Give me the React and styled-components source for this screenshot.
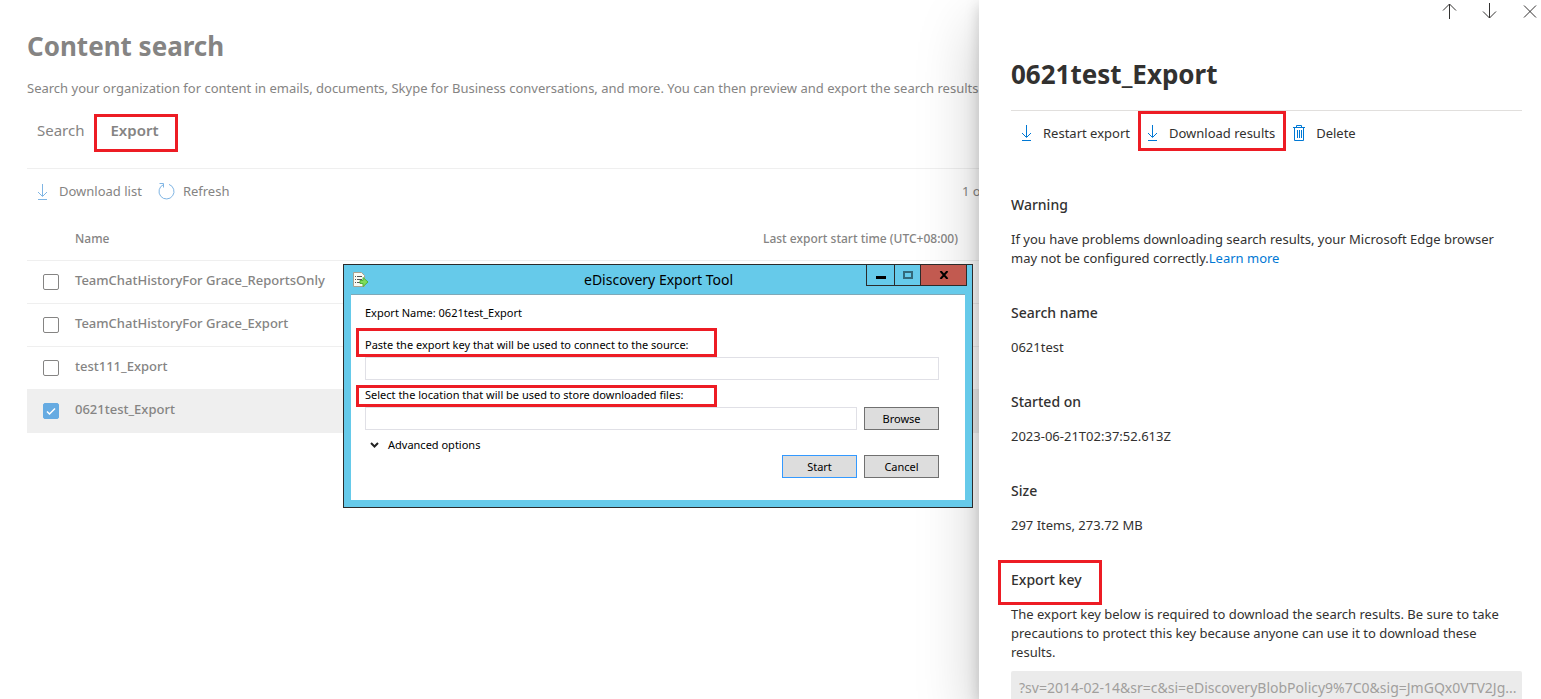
import React from "react";
import styled, { createGlobalStyle } from "styled-components";

const GlobalStyle = createGlobalStyle`
  * {
    box-sizing: border-box;
  }

  body {
    margin: 0;
    background: #fff;
    color: #323130;
    font: 13px/19px "Noto Sans", "Open Sans", sans-serif;
    overflow: hidden;
  }

  button,
  input {
    font: inherit;
    color: inherit;
  }

  h1,
  h2,
  h3,
  p {
    margin: 0;
  }
`;

const Screen = styled.div`
  position: relative;
  display: flex;
  height: 100vh;
  overflow: hidden;
`;

const Main = styled.main`
  flex: 1;
  min-width: 0;
  padding: 28px 0 0 27px;
  color: #858483;
  white-space: nowrap;
  overflow: hidden;
`;

const PageTitle = styled.h1`
  font-size: 26px;
  line-height: 36px;
  font-weight: 700;
`;

const PageText = styled.p`
  margin-top: 15px;
`;

const Tabs = styled.div`
  display: flex;
  margin-top: 16px;
  padding-bottom: 16px;
  border-bottom: 1px solid #efefef;
`;

const Tab = styled.button`
  height: 38px;
  padding: 0 10px 6px;
  border: 0;
  background: none;
  font-size: 15px;
  font-weight: ${(props) => (props.$active ? 600 : 400)};
`;

const MarkedTab = styled.span`
  height: 38px;
  padding: 0 6px 0 3px;
  border: 3px solid #ed1c24;

  ${Tab} {
    height: 30px;
    padding-bottom: 4px;
  }
`;

const Toolbar = styled.div`
  display: flex;
  align-items: center;
  height: 45px;
  padding-left: 8px;
`;

const ToolButton = styled.button`
  display: flex;
  align-items: center;
  gap: 8px;
  padding: 0;
  margin-right: 16px;
  border: 0;
  background: none;
`;

const SelectedCount = styled.span`
  margin-left: auto;
  width: 17px;
`;

const ExportTable = styled.table`
  width: 100%;
  border-collapse: collapse;
  table-layout: fixed;
`;

const HeadCell = styled.th`
  width: ${(props) => props.$width || "auto"};
  height: 46px;
  padding: 3px 0 0;
  border-bottom: 1px solid #efefef;
  font-size: 12px;
  font-weight: 500;
  text-align: left;
`;

const Row = styled.tr`
  background: ${(props) => (props.$selected ? "#efefef" : "transparent")};
`;

const Cell = styled.td`
  height: 43px;
  padding: 0 0 2px;
  border-bottom: 1px solid #efefef;
  font-weight: 500;
`;

const CheckCell = styled(Cell)`
  padding: 0 0 0 16px;
`;

const CheckLabel = styled.label`
  display: grid;
  width: 16px;

  > * {
    grid-area: 1 / 1;
  }
`;

const CheckBox = styled.input`
  appearance: none;
  display: block;
  width: 16px;
  height: 16px;
  margin: 0;
  border: 1px solid #858483;
  border-radius: 2px;
  background: #fff;

  &:checked {
    border-color: #66abe2;
    background: #66abe2;
  }
`;

const Flyout = styled.aside`
  position: relative;
  flex: 0 0 562px;
  padding: 0 19px 0 32px;
  background: #fff;
  box-shadow: 0 26px 58px rgba(0, 0, 0, 0.22), 0 5px 14px rgba(0, 0, 0, 0.18);
`;

const FlyoutNav = styled.div`
  display: flex;
  justify-content: flex-end;
  gap: 24px;
  height: 56px;
  padding-top: 3px;
  margin-right: -16px;
`;

const IconButton = styled.button`
  width: 16px;
  height: 16px;
  padding: 0;
  border: 0;
  background: none;
`;

const FlyoutTitle = styled.h2`
  padding-bottom: 18px;
  border-bottom: 1px solid #e1dfdd;
  font-size: 26px;
  line-height: 36px;
  font-weight: 700;
`;

const FlyoutActions = styled.div`
  display: flex;
  align-items: center;
  height: 40px;
  margin-bottom: 44px;
  padding-left: 8px;

  ${ToolButton} {
    margin-right: 8px;
    padding-top: 4px;
  }
`;

const MarkedAction = styled.span`
  display: flex;
  align-items: center;
  height: 40px;
  padding-left: 4px;
  margin-right: 6px;
  border: 3px solid #ed1c24;
`;

const Field = styled.section`
  margin-bottom: 35px;
`;

const FieldTitle = styled.h3`
  font-size: 14px;
  line-height: 20px;
  font-weight: 500;
`;

const MarkedTitle = styled(FieldTitle)`
  width: 104px;
  margin: -10px 0 -15px -13px;
  padding: 7px 10px 12px;
  border: 3px solid #ed1c24;
`;

const FieldText = styled.p`
  display: block;
  margin-top: 15px;
`;

const Link = styled.a`
  color: #0078d4;
  text-decoration: none;
`;

const KeyBox = styled.input`
  display: block;
  width: 100%;
  height: 32px;
  margin-top: 9px;
  padding: 0 2px 0 8px;
  border: 0;
  border-radius: 2px;
  background: #ebebeb;
  color: #a19f9d;
  font-size: 14px;
`;

const Dialog = styled.div`
  position: absolute;
  left: 343px;
  top: 264px;
  width: 630px;
  padding: 0 7px 7px;
  border: 1px solid #2b2b2b;
  background: #66caea;
  color: #000;
  font-size: 11px;
  line-height: 14px;
`;

const TitleBar = styled.header`
  display: grid;
  grid-template-columns: 1fr auto 1fr;
  height: 29px;
  padding-left: 1px;
`;

const DialogTitle = styled.h2`
  font-size: 14px;
  line-height: 30px;
  font-weight: 400;
`;

const DialogIcon = styled.svg`
  margin-top: 6px;
`;

const WindowButtons = styled.div`
  display: flex;
  justify-content: flex-end;
  height: 21px;
  margin-right: -2px;
`;

const WindowButton = styled.button`
  width: ${(props) => props.$width};
  height: 22px;
  margin: -1px 0 0 -1px;
  padding: 0;
  border: 1px solid #2b2b2b;
  background: ${(props) => (props.$close ? "#c25a50" : "transparent")};
`;

const DialogBody = styled.div`
  height: 206px;
  padding: 11px 26px 0 14px;
  border-top: 1px solid #7fa9b8;
  background: #fff;
`;

const MarkedLabel = styled.label`
  display: block;
  width: 361px;
  height: ${(props) => (props.$tall ? "29px" : "22px")};
  margin: ${(props) => (props.$tall ? "8px" : "5px")} 0 0 -9px;
  padding: ${(props) => (props.$tall ? "7px" : "0")} 6px 0;
  border: 3px solid #ed1c24;
`;

const DialogInput = styled.input`
  display: block;
  width: 100%;
  height: 23px;
  padding: 0 4px;
  border: 1px solid #e0e0e6;
  background: #fff;
`;

const PathRow = styled.div`
  display: flex;
  gap: 7px;
`;

const DialogButton = styled.button`
  flex: none;
  width: 75px;
  height: 23px;
  padding: 0;
  border: 1px solid ${(props) => (props.$primary ? "#3399ff" : "#707070")};
  background: #ddd;
`;

const Advanced = styled.button`
  display: flex;
  align-items: center;
  gap: 9px;
  margin-top: 8px;
  padding: 0 0 0 5px;
  border: 0;
  background: none;
`;

const DialogFooter = styled.div`
  display: flex;
  justify-content: flex-end;
  gap: 7px;
  margin-top: 3px;
`;

const rows = [
  { name: "TeamChatHistoryFor Grace_ReportsOnly" },
  { name: "TeamChatHistoryFor Grace_Export" },
  { name: "test111_Export" },
  { name: "0621test_Export", selected: true },
];

const DownloadIcon = ({ color = "#0078d4" }) => (
  <svg width="16" height="16" viewBox="0 0 16 16" fill="none" stroke={color}>
    <path d="M7.5 0v12M3 8l4.5 4.5L12 8M3 15.5h9" />
  </svg>
);

const RefreshIcon = () => (
  <svg width="17" height="17" viewBox="0 0 17 17" fill="none" stroke="#7fb5e4">
    <path d="M11 1.4A7.5 7.5 0 1 1 5.5 1.6M1.5 .5h4v4" />
  </svg>
);

const TrashIcon = () => (
  <svg width="16" height="16" viewBox="0 0 16 16" fill="none" stroke="#0078d4">
    <path d="M1 2.5h12M4.5 2.5v-2h5v2M2.5 2.5v13h9v-13M5.5 5v8M7.5 5v8M9.5 5v8" />
  </svg>
);

const ArrowIcon = ({ down }) => (
  <svg width="16" height="16" viewBox="0 0 16 16" fill="none" stroke="#323130">
    <path d={down ? "M7.5 0v15M1 8.5L7.5 15L14 8.5" : "M7.5 16V1M1 7.5L7.5 1L14 7.5"} />
  </svg>
);

const CloseIcon = () => (
  <svg width="16" height="16" viewBox="0 0 16 16" fill="none" stroke="#323130">
    <path d="M2 2.5l12 12M14 2.5l-12 12" />
  </svg>
);

const ExportWindow = () => (
  <Dialog role="dialog" aria-labelledby="dialog-title">
    <TitleBar>
      <DialogIcon width="17" height="17" viewBox="0 0 17 17">
        <path d="M1.5 1.5h8l3 3v11h-11z" fill="#fbfaf3" stroke="#a8a290" />
        <path d="M3 5.5h1M3 8.5h1M3 11.5h1M5 5.5h5M5 8.5h5M5 11.5h4" stroke="#555" />
        <path d="M8 9.5h3v-3l5 4.5l-5 4.5v-3H8z" fill="#7fdc5a" stroke="#4fb53a" />
      </DialogIcon>
      <DialogTitle id="dialog-title">eDiscovery Export Tool</DialogTitle>
      <WindowButtons>
        <WindowButton $width="29px" aria-label="Minimize">
          <svg width="10" height="10" viewBox="0 0 10 10">
            <path d="M0 7h10v3H0z" />
          </svg>
        </WindowButton>
        <WindowButton $width="27px" aria-label="Maximize">
          <svg width="10" height="8" viewBox="0 0 10 8" fill="none">
            <path d="M1 1h8v6H1z" stroke="#33697a" strokeWidth="2" />
          </svg>
        </WindowButton>
        <WindowButton $width="47px" $close aria-label="Close">
          <svg width="10" height="8" viewBox="0 0 10 8" fill="none">
            <path d="M1.5 0l7 8M8.5 0l-7 8" stroke="#000" strokeWidth="2" />
          </svg>
        </WindowButton>
      </WindowButtons>
    </TitleBar>
    <DialogBody>
      <p>Export Name: 0621test_Export</p>
      <MarkedLabel htmlFor="key" $tall>
        Paste the export key that will be used to connect to the source:
      </MarkedLabel>
      <DialogInput id="key" />
      <MarkedLabel htmlFor="path">
        Select the location that will be used to store downloaded files:
      </MarkedLabel>
      <PathRow>
        <DialogInput id="path" />
        <DialogButton>Browse</DialogButton>
      </PathRow>
      <Advanced>
        <svg width="9" height="6" viewBox="0 0 9 6" fill="none" stroke="#222" strokeWidth="2">
          <path d="M1 1l3.5 3.5L8 1" />
        </svg>
        Advanced options
      </Advanced>
      <DialogFooter>
        <DialogButton $primary>Start</DialogButton>
        <DialogButton>Cancel</DialogButton>
      </DialogFooter>
    </DialogBody>
  </Dialog>
);

const App = () => (
  <Screen>
    <GlobalStyle />
    <Main>
      <PageTitle>Content search</PageTitle>
      <PageText>
        Search your organization for content in emails, documents, Skype for Business
        conversations, and more. You can then preview and export the search results
      </PageText>
      <Tabs>
        <Tab>Search</Tab>
        <MarkedTab>
          <Tab $active>Export</Tab>
        </MarkedTab>
      </Tabs>
      <Toolbar>
        <ToolButton>
          <DownloadIcon color="#7fb5e4" />
          Download list
        </ToolButton>
        <ToolButton>
          <RefreshIcon />
          Refresh
        </ToolButton>
        <SelectedCount>1 of</SelectedCount>
      </Toolbar>
      <ExportTable>
        <thead>
          <tr>
            <HeadCell $width="48px" />
            <HeadCell>Name</HeadCell>
            <HeadCell $width="216px">Last export start time (UTC+08:00)</HeadCell>
          </tr>
        </thead>
        <tbody>
          {rows.map((row) => (
            <Row key={row.name} $selected={row.selected}>
              <CheckCell>
                <CheckLabel>
                  <CheckBox type="checkbox" aria-label={row.name} defaultChecked={row.selected} />
                  {row.selected && (
                    <svg width="16" height="16" viewBox="0 0 16 16" fill="none" stroke="#fff">
                      <path d="M4 8.5l2.5 2.5L12 5.5" strokeWidth="1.5" />
                    </svg>
                  )}
                </CheckLabel>
              </CheckCell>
              <Cell>{row.name}</Cell>
              <Cell />
            </Row>
          ))}
        </tbody>
      </ExportTable>
    </Main>
    <Flyout>
      <FlyoutNav>
        <IconButton aria-label="Previous">
          <ArrowIcon />
        </IconButton>
        <IconButton aria-label="Next">
          <ArrowIcon down />
        </IconButton>
        <IconButton aria-label="Close">
          <CloseIcon />
        </IconButton>
      </FlyoutNav>
      <FlyoutTitle>0621test_Export</FlyoutTitle>
      <FlyoutActions>
        <ToolButton>
          <DownloadIcon />
          Restart export
        </ToolButton>
        <MarkedAction>
          <ToolButton>
            <DownloadIcon />
            Download results
          </ToolButton>
        </MarkedAction>
        <ToolButton>
          <TrashIcon />
          Delete
        </ToolButton>
      </FlyoutActions>
      <Field>
        <FieldTitle>Warning</FieldTitle>
        <FieldText>
          If you have problems downloading search results, your Microsoft Edge browser may not be
          configured correctly.<Link href="#learn-more">Learn more</Link>
        </FieldText>
      </Field>
      <Field>
        <FieldTitle>Search name</FieldTitle>
        <FieldText>0621test</FieldText>
      </Field>
      <Field>
        <FieldTitle>Started on</FieldTitle>
        <FieldText>2023-06-21T02:37:52.613Z</FieldText>
      </Field>
      <Field>
        <FieldTitle>Size</FieldTitle>
        <FieldText>297 Items, 273.72 MB</FieldText>
      </Field>
      <Field>
        <MarkedTitle>Export key</MarkedTitle>
        <FieldText as="label" htmlFor="export-key">
          The export key below is required to download the search results. Be sure to take
          precautions to protect this key because anyone can use it to download these results.
        </FieldText>
        <KeyBox
          id="export-key"
          readOnly
          value="?sv=2014-02-14&sr=c&si=eDiscoveryBlobPolicy9%7C0&sig=JmGQx0VTV2Jg..."
        />
      </Field>
    </Flyout>
    <ExportWindow />
  </Screen>
);

export default App;
